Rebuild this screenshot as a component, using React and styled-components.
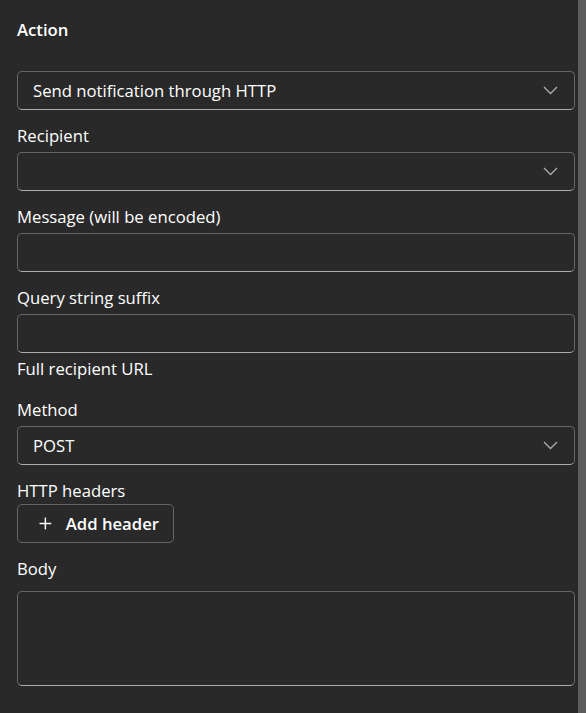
import styled, { createGlobalStyle } from "styled-components";

const GlobalStyle = createGlobalStyle`
    * {
        box-sizing: border-box;
    }
    body {
        margin: 0;
        background-color: #292929;
        color: #ffffff;
        font-family: "Open Sans", "Noto Sans", sans-serif;
        font-size: 16.7px;
    }
`

const Page = styled.div`
    display: flex;
    height: 100vh;
    background-color: #292929;
`

const Panel = styled.div`
    flex: 1;
    display: flex;
    flex-direction: column;
    padding: 18px 3px 0 17px;
`

const Scrollbar = styled.div`
    width: 8px;
    background-color: #5c5c5c;
`

const Heading = styled.div`
    font-weight: 600;
    line-height: 24px;
    margin-bottom: 29px;
`

const Form = styled.div`
    display: flex;
    flex-direction: column;
    gap: 14px;
`

const Field = styled.div`
    display: flex;
    flex-direction: column;
    gap: ${(p) => p.$gap ?? 4}px;
    margin-top: ${(p) => p.$mt ?? 0}px;
`

const Label = styled.div`
    line-height: 24px;
    color: #ffffff;
`

const SelectBox = styled.div`
    height: 39px;
    display: flex;
    align-items: center;
    justify-content: space-between;
    padding: 0 16px 0 15px;
    border: 1px solid #666666;
    border-bottom-color: #adadad;
    border-radius: 5px;
    color: #ffffff;
    cursor: pointer;
`

const TextInput = styled.input`
    height: 39px;
    width: 100%;
    padding: 0 15px;
    border: 1px solid #666666;
    border-bottom-color: #adadad;
    border-radius: 5px;
    background-color: transparent;
    color: #ffffff;
    font: inherit;
    outline: none;
`

const TextArea = styled.textarea`
    height: 95px;
    width: 100%;
    padding: 8px 15px;
    border: 1px solid #666666;
    border-bottom-color: #adadad;
    border-radius: 5px;
    background-color: transparent;
    color: #ffffff;
    font: inherit;
    resize: none;
    outline: none;
    display: block;
`

const AddButton = styled.button`
    align-self: flex-start;
    height: 39px;
    width: 157px;
    display: flex;
    align-items: center;
    gap: 14px;
    padding: 0 14px 0 21px;
    border: 1px solid #666666;
    border-radius: 5px;
    background-color: #292929;
    color: #ffffff;
    font: inherit;
    font-weight: 600;
    white-space: nowrap;
    cursor: pointer;
`

function Chevron() {
    return (
        <svg width="15" height="9" viewBox="0 0 15 9" fill="none">
            <polyline points="1,1 7.5,7.5 14,1" stroke="#adadad" strokeWidth="1.3" />
        </svg>
    )
}

function Plus() {
    return (
        <svg width="13" height="13" viewBox="0 0 13 13" fill="none">
            <line x1="6.5" y1="0.5" x2="6.5" y2="12.5" stroke="#ffffff" strokeWidth="1.5" />
            <line x1="0.5" y1="6.5" x2="12.5" y2="6.5" stroke="#ffffff" strokeWidth="1.5" />
        </svg>
    )
}

function Select({ value }) {
    return (
        <SelectBox>
            <span>{value}</span>
            <Chevron />
        </SelectBox>
    )
}

export default function App() {
    return (
        <>
            <GlobalStyle />
            <Page>
                <Panel>
                    <Heading>Action</Heading>
                    <Form>
                        <Select value="Send notification through HTTP" />

                        <Field>
                            <Label>Recipient</Label>
                            <Select value="" />
                        </Field>

                        <Field>
                            <Label>Message (will be encoded)</Label>
                            <TextInput />
                        </Field>

                        <Field>
                            <Label>Query string suffix</Label>
                            <TextInput />
                            <Label>Full recipient URL</Label>
                        </Field>

                        <Field $mt={3}>
                            <Label>Method</Label>
                            <Select value="POST" />
                        </Field>

                        <Field $gap={1}>
                            <Label>HTTP headers</Label>
                            <AddButton type="button">
                                <Plus />
                                Add header
                            </AddButton>
                        </Field>

                        <Field $gap={10}>
                            <Label>Body</Label>
                            <TextArea />
                        </Field>
                    </Form>
                </Panel>
                <Scrollbar />
            </Page>
        </>
    )
}
